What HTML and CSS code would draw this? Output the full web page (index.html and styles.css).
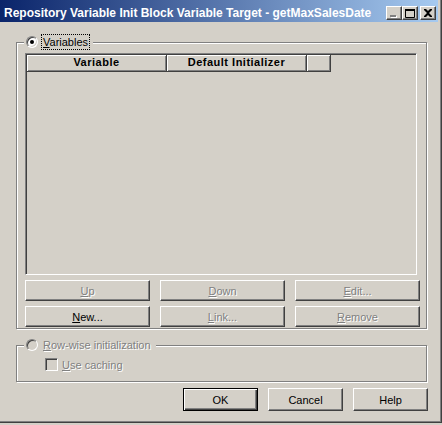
FILE: index.html
```html
<!DOCTYPE html>
<html>
<head>
<meta charset="utf-8">
<link rel="stylesheet" href="styles.css">
</head>
<body>
<div class="window">
  <div class="titlebar">
    <span class="title">Repository Variable Init Block Variable Target - getMaxSalesDate</span>
    <div class="caption-btns">
      <span class="cbtn">
        <svg width="14" height="12" viewBox="0 0 14 12"><rect x="4" y="9" width="6" height="2" fill="#fff"/><rect x="3" y="8" width="6" height="2" fill="#808080"/></svg>
      </span>
      <span class="cbtn">
        <svg width="14" height="12" viewBox="0 0 14 12"><path d="M2.5 2.5h9v8h-9z" fill="none" stroke="#000"/><rect x="2" y="2" width="10" height="2" fill="#000"/></svg>
      </span>
      <span class="cbtn close">
        <svg width="14" height="12" viewBox="0 0 14 12"><path d="M3 2h2l2 2 2-2h2v1l-3 3 3 3v1h-2l-2-2-2 2h-2v-1l3-3-3-3z" fill="#000"/></svg>
      </span>
    </div>
  </div>
  <div class="client">
    <div class="group g1">
      <div class="legend">
        <span class="radio"><span class="dot"></span></span>
        <span class="label focus"><u>V</u>ariables</span>
      </div>
      <div class="listview">
        <div class="thead">
          <div class="th c1">Variable</div>
          <div class="th c2">Default Initializer</div>
          <div class="th c3"></div>
        </div>
      </div>
      <div class="btn-grid">
        <div class="btn disabled"><u>U</u>p</div>
        <div class="btn disabled"><u>D</u>own</div>
        <div class="btn disabled"><u>E</u>dit...</div>
        <div class="btn"><u>N</u>ew...</div>
        <div class="btn disabled"><u>L</u>ink...</div>
        <div class="btn disabled"><u>R</u>emove</div>
      </div>
    </div>
    <div class="group g2">
      <div class="legend">
        <span class="radio off"></span>
        <span class="label disabled-text"><u>R</u>ow-wise initialization</span>
      </div>
      <div class="check-row">
        <span class="checkbox"></span>
        <span class="disabled-text"><u>U</u>se caching</span>
      </div>
    </div>
    <div class="dialog-btns">
      <div class="btn big default">OK</div>
      <div class="btn big">Cancel</div>
      <div class="btn big">Help</div>
    </div>
  </div>
</div>
</body>
</html>
```
FILE: styles.css
```css
html, body {
  margin: 0;
  padding: 0;
  background: #d4d0c8;
}
body {
  font-family: "Liberation Sans", Arial, sans-serif;
  font-size: 11px;
  color: #000;
}
.window {
  width: 442px;
  height: 423px;
  box-sizing: border-box;
  background: #d4d0c8;
  border-right: 1px solid #404040;
  border-bottom: 1px solid #404040;
  box-shadow: inset -1px -1px 0 #808080;
  padding-right: 3px;
  display: flex;
  flex-direction: column;
}
.titlebar {
  height: 22px;
  box-sizing: border-box;
  padding: 4px 2px 0 4px;
  background: linear-gradient(to right, #0a246a, #a6caf0);
  display: flex;
  align-items: center;
  justify-content: space-between;
}
.title {
  color: #fff;
  font-weight: bold;
  font-size: 12px;
  line-height: 18px;
  white-space: nowrap;
  letter-spacing: 0;
}
.caption-btns {
  display: flex;
}
.cbtn {
  width: 16px;
  height: 14px;
  box-sizing: border-box;
  background: #d4d0c8;
  border: 1px solid;
  border-color: #fff #404040 #404040 #fff;
  box-shadow: inset -1px -1px 0 #808080;
  display: flex;
}
.cbtn svg { display: block; }
.cbtn.close { margin-left: 2px; }
.client {
  padding: 20px 0 0 16px;
  display: flex;
  flex-direction: column;
}
.group {
  width: 411px;
  box-sizing: border-box;
  border: 1px solid #808080;
  box-shadow: inset 1px 1px 0 #fff, 1px 1px 0 #fff;
  display: flex;
  flex-direction: column;
}
.g1 { padding-bottom: 1px; }
.g2 { margin-top: 16px; padding-bottom: 9px; }
.legend {
  margin: -9px 0 0 7px;
  padding: 0 3px 0 2px;
  height: 16px;
  background: #d4d0c8;
  align-self: flex-start;
  display: flex;
  align-items: center;
}
.radio {
  width: 12px;
  height: 12px;
  box-sizing: border-box;
  border-radius: 50%;
  border: 1px solid;
  border-color: #808080 #fff #fff #808080;
  box-shadow: inset 1px 1px 0 #404040, inset -1px -1px 0 #d4d0c8;
  background: #fff;
  margin-right: 3px;
  display: flex;
  align-items: center;
  justify-content: center;
}
.radio.off { background: #d4d0c8; }
.dot {
  width: 4px;
  height: 4px;
  border-radius: 50%;
  background: #000;
}
.label {
  padding: 0 1px;
  line-height: 14px;
  border: 1px solid transparent;
}
.label.focus { border: 1px dotted #000; }
.disabled-text {
  color: #808080;
  text-shadow: 1px 1px 0 #fff;
}
.listview {
  margin: 3px 0 0 8px;
  width: 392px;
  height: 222px;
  box-sizing: border-box;
  border: 1px solid;
  border-color: #808080 #fff #fff #808080;
  padding: 1px;
  box-shadow: inset 1px 1px 0 #404040, inset -1px -1px 0 #d4d0c8;
}
.thead {
  display: flex;
  height: 17px;
}
.th {
  box-sizing: border-box;
  height: 17px;
  border-right: 1px solid #404040;
  border-bottom: 1px solid #404040;
  box-shadow: inset 1px 1px 0 #fff, inset -1px -1px 0 #808080;
  font-weight: bold;
  text-align: center;
  line-height: 15px;
  letter-spacing: 0.5px;
}
.c1 { width: 140px; }
.c2 { width: 140px; }
.c3 { width: 24px; }
.btn-grid {
  margin: 5px 0 0 8px;
  width: 395px;
  display: grid;
  grid-template-columns: repeat(3, 1fr);
  column-gap: 10px;
  row-gap: 5px;
}
.btn {
  height: 21px;
  box-sizing: border-box;
  border: 1px solid;
  border-color: #fff #404040 #404040 #fff;
  box-shadow: inset -1px -1px 0 #808080;
  display: flex;
  align-items: center;
  justify-content: center;
}
.btn.disabled {
  color: #808080;
  text-shadow: 1px 1px 0 #fff;
}
.check-row {
  margin: 4px 0 0 28px;
  height: 15px;
  display: flex;
  align-items: center;
}
.checkbox {
  width: 13px;
  height: 13px;
  box-sizing: border-box;
  border: 1px solid;
  border-color: #808080 #fff #fff #808080;
  box-shadow: inset 1px 1px 0 #404040, inset -1px -1px 0 #d4d0c8;
  background: #d4d0c8;
  margin-right: 4px;
}
.dialog-btns {
  margin-top: 6px;
  width: 412px;
  display: flex;
  justify-content: flex-end;
  gap: 10px;
}
.btn.big {
  width: 75px;
  height: 23px;
}
.btn.default {
  border: 1px solid #000;
  box-shadow: inset 1px 1px 0 #fff, inset -1px -1px 0 #404040, inset -2px -2px 0 #808080;
}
```
